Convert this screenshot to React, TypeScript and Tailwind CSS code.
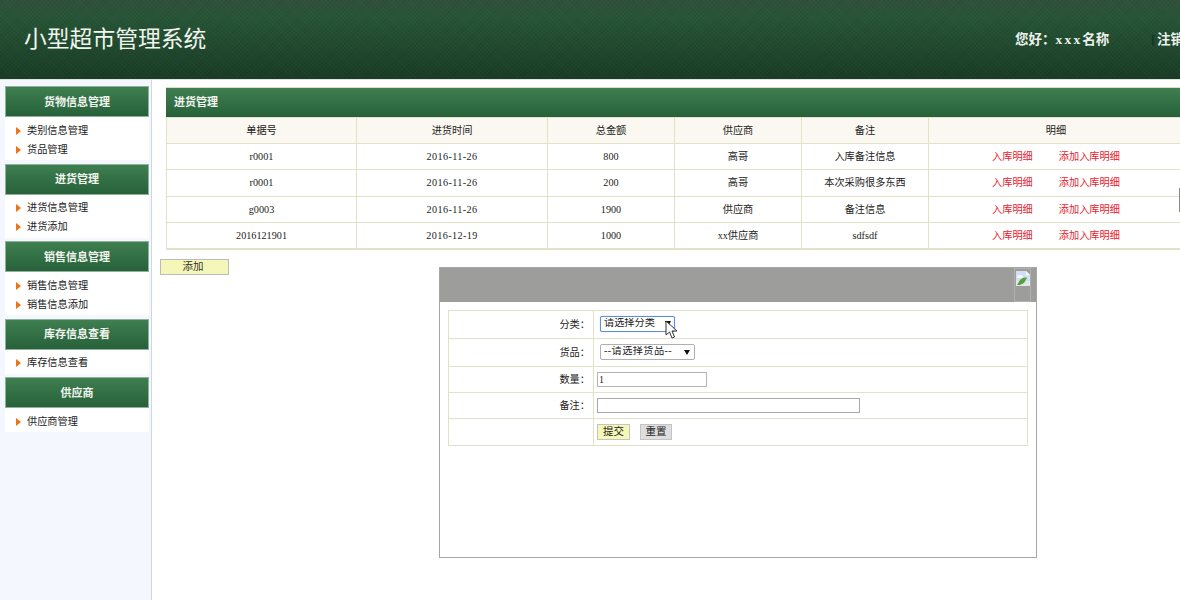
import React from "react";

const groups = [
  { title: "货物信息管理", items: ["类别信息管理", "货品管理"] },
  { title: "进货管理", items: ["进货信息管理", "进货添加"] },
  { title: "销售信息管理", items: ["销售信息管理", "销售信息添加"] },
  { title: "库存信息查看", items: ["库存信息查看"] },
  { title: "供应商", items: ["供应商管理"] },
];

const rows = [
  ["r0001", "2016-11-26", "800", "高哥", "入库备注信息"],
  ["r0001", "2016-11-26", "200", "高哥", "本次采购很多东西"],
  ["g0003", "2016-11-26", "1900", "供应商", "备注信息"],
  ["2016121901", "2016-12-19", "1000", "xx供应商", "sdfsdf"],
];

const greenBar = "bg-gradient-to-b from-[#3f7f50] to-[#27613a]";
const cjk = "font-['Liberation_Serif','Noto_Sans_CJK_SC',serif]";
const headers = ["单据号", "进货时间", "总金额", "供应商", "备注", "明细"];

export default function App() {
  return (
    <div className={`relative h-[600px] w-[1180px] overflow-hidden bg-white text-[10.2px] text-[#222] ${cjk}`}>
      <header className="flex h-[79px] items-center justify-between bg-[repeating-linear-gradient(45deg,rgba(255,255,255,0.015)_0px,rgba(255,255,255,0.015)_1px,transparent_1px,transparent_3px),repeating-linear-gradient(-45deg,rgba(0,0,0,0.05)_0px,rgba(0,0,0,0.05)_1px,transparent_1px,transparent_3px),linear-gradient(to_bottom,#31503b,#275536_22%,#193c26)] pl-6 pr-0">
        <h1 className="mt-[1px] text-[22.8px] font-normal text-[#f1f4ee]">小型超市管理系统</h1>
        <div className="mt-[2px] flex w-[165px] items-center text-[13.5px] font-semibold text-[#eef2ec]">
          <span className="w-[136px] shrink-0 whitespace-nowrap">
            您好：<span className="tracking-[2.2px]">xxx</span>名称
          </span>
          <span className="shrink-0 text-[#173521]">[</span>
          <span className="ml-[1.5px] shrink-0 whitespace-nowrap">注销</span>
        </div>
      </header>
      <div className="flex h-[521px] border-t border-[#dfe6df]">
        <aside className="w-[152px] shrink-0 border-r border-[#cdd6e8] bg-[#f4f8fe] pl-[5px] pr-[2px] pt-[6px]">
          {groups.map((g) => (
            <section key={g.title} className="mb-[3.5px]">
              <h2 className={`flex h-[31px] items-center justify-center border border-[#8fb09a] pt-px text-[11px] font-bold text-[#f2f5ef] ${greenBar}`}>
                {g.title}
              </h2>
              <ul className="bg-white pb-px pl-[11px] pt-[4px] text-[10.2px]">
                {g.items.map((it) => (
                  <li key={it} className="flex h-[19px] items-center gap-[6px]">
                    <span className="h-0 w-0 border-y-[4px] border-l-[5px] border-y-transparent border-l-[#ee7314]" />
                    {it}
                  </li>
                ))}
              </ul>
            </section>
          ))}
        </aside>
        <main className="min-w-0 flex-1 pl-[8px] pt-[7px]">
          <div className="ml-[6px] w-[1018px] border-b border-[#dfe0c6]">
            <div className={`flex h-[30px] items-center border-t border-[#d8e0c8] pl-2 text-[11px] font-bold text-[#f2f5ef] ${greenBar}`}>
              进货管理
            </div>
            <table className="w-full table-fixed border-collapse text-center">
              <colgroup>
                <col className="w-[190px]" />
                <col className="w-[191px]" />
                <col className="w-[127px]" />
                <col className="w-[127px]" />
                <col className="w-[127px]" />
                <col />
              </colgroup>
              <thead>
                <tr className="h-[26px] bg-[#fbf8f1]">
                  {headers.map((h) => (
                    <th key={h} className="border border-[#e2e2c8] font-normal">{h}</th>
                  ))}
                </tr>
              </thead>
              <tbody>
                {rows.map((r, i) => (
                  <tr key={i} className="h-[26.3px]">
                    {r.map((c, j) => (
                      <td key={j} className={`border border-[#e2e2c8] ${j === 1 ? "tracking-[0.4px]" : ""}`}>{c}</td>
                    ))}
                    <td className="border border-[#e2e2c8] text-[#ea1a2c]">
                      <span className="mr-[26px]">入库明细</span>
                      <span>添加入库明细</span>
                    </td>
                  </tr>
                ))}
              </tbody>
            </table>
          </div>
          <button className="mt-[9px] h-[16px] w-[69px] border border-[#bbbbbb] bg-[#f5f7b8] pr-[3px] text-[10.5px] leading-none text-[#333]">
            添加
          </button>
        </main>
      </div>

      <div className="absolute left-[439px] top-[267px] h-[291px] w-[598px] border border-[#a6a6a6] bg-white">
        <div className="flex h-[34px] justify-end bg-[#9d9e9c] pr-[5px]">
          <div className="h-[34px] w-[17px] border border-[#b0b1af] pl-px pt-[2px]">
            <svg className="block" width="14" height="15" viewBox="0 0 14 15">
              <path d="M0 0h10l4 4v11H0z" fill="#e4e6e8" />
              <path d="M0 0h10v4h4v6H0z" fill="#cfe0f6" />
              <path d="M10 0l4 4h-4z" fill="#fafafa" />
              <path d="M1 5c2-2 4-1 6 0l-1 2H1z" fill="#f4f8fe" />
              <path d="M1 14l3-5c2-2 5-3 7-2l-3 5-4 2z" fill="#5a9f3c" />
            </svg>
          </div>
        </div>
        <table className="ml-2 mt-2 w-[580px] table-fixed border-collapse">
          <colgroup>
            <col className="w-[145px]" />
            <col />
          </colgroup>
          <tbody>
            <tr className="h-[28px]">
              <td className="border border-[#e2e2c8] pr-[3px] text-right">分类：</td>
              <td className="border border-[#e2e2c8] pb-[2px] pl-[6px]">
                <div className="relative w-[75px]">
                  <select className="block h-[16px] w-full appearance-none rounded-[2px] border border-[#5b8fd8] bg-white pl-[3px] text-[10.2px] leading-none shadow-[0_0_1px_#7ba8e8] outline-none">
                    <option>请选择分类</option>
                  </select>
                  <span className="pointer-events-none absolute right-[4px] top-[5px] h-0 w-0 border-x-[3px] border-t-[6px] border-x-transparent border-t-[#111]" />
                </div>
              </td>
            </tr>
            <tr className="h-[28px]">
              <td className="border border-[#e2e2c8] pr-[3px] text-right">货品：</td>
              <td className="border border-[#e2e2c8] pb-[2px] pl-[6px]">
                <div className="relative w-[95px]">
                  <select className="block h-[16px] w-full appearance-none rounded-[2px] border border-[#b0b0b0] bg-white pl-[3px] text-[10.2px] leading-none tracking-[0.4px] outline-none">
                    <option>--请选择货品--</option>
                  </select>
                  <span className="pointer-events-none absolute right-[5px] top-[6px] h-0 w-0 border-x-[3px] border-t-[5px] border-x-transparent border-t-[#111]" />
                </div>
              </td>
            </tr>
            <tr className="h-[26px]">
              <td className="border border-[#e2e2c8] pr-[3px] text-right">数量：</td>
              <td className="border border-[#e2e2c8] pl-[3px]">
                <input defaultValue="1" className="block h-[15px] w-[110px] border border-[#b4b4b4] pl-px text-[10px] leading-none outline-none" />
              </td>
            </tr>
            <tr className="h-[26px]">
              <td className="border border-[#e2e2c8] pr-[3px] text-right">备注：</td>
              <td className="border border-[#e2e2c8] pl-[3px]">
                <input className="block h-[15px] w-[263px] border border-[#a8a8a8] outline-none" />
              </td>
            </tr>
            <tr className="h-[27px]">
              <td className="border border-[#e2e2c8]" />
              <td className="border border-[#e2e2c8] pl-[3px]">
                <div className="flex gap-[10px]">
                  <button className="h-[16px] w-[33px] border border-[#c4c4c4] bg-[#f5f7b8] text-[10.5px] leading-none">提交</button>
                  <button className="h-[16px] w-[32px] border border-[#c4c4c4] bg-[#dedede] text-[10.5px] leading-none">重置</button>
                </div>
              </td>
            </tr>
          </tbody>
        </table>
      </div>

      <div className="absolute right-0 top-[188px] h-[24px] w-px bg-[#8a8a8a]" />

      <svg className="absolute left-[665px] top-[320px]" width="13" height="19" viewBox="0 0 13 19">
        <path d="M1 1v14l3.5-3 2.5 6 2.5-1-2.5-6H12z" fill="#fff" stroke="#333" strokeWidth="1" strokeLinejoin="round" />
      </svg>
    </div>
  );
}
